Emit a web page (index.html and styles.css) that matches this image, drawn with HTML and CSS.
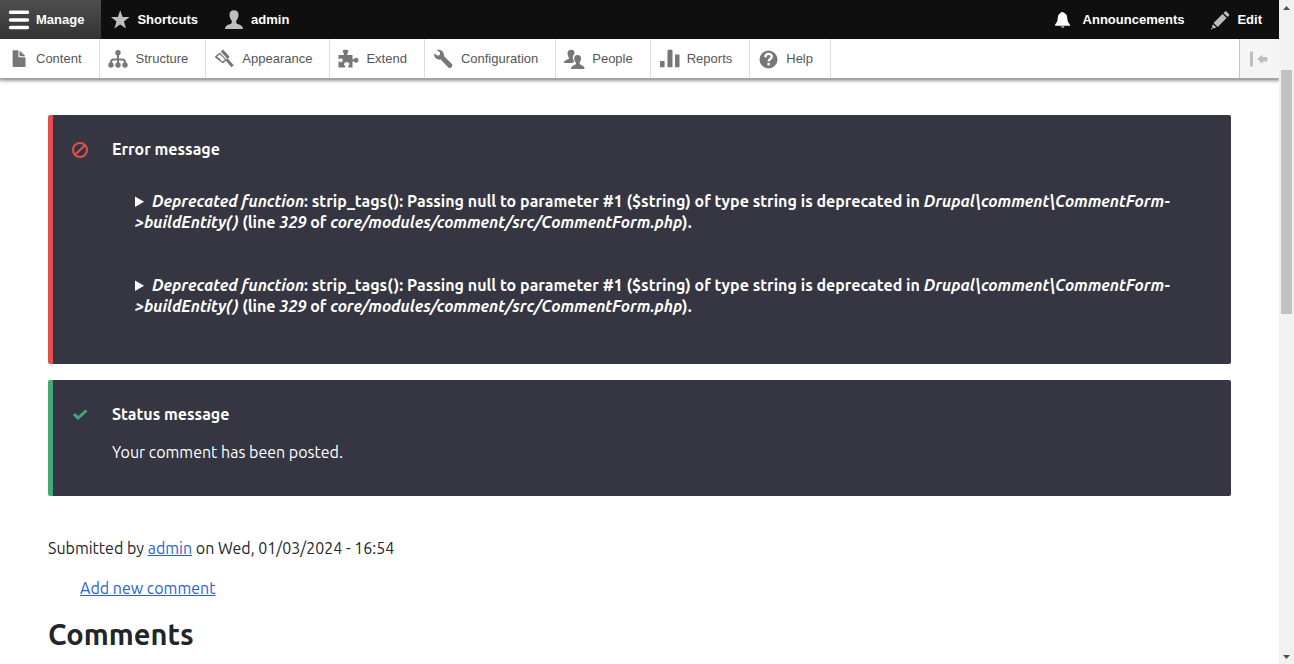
FILE: index.html
```html
<!DOCTYPE html>
<html lang="en">
<head>
    <meta charset="UTF-8">
    <title>Comments</title>
    <link rel="stylesheet" href="styles.css">
</head>
<body>
    <div class="page">
        <!-- Admin toolbar -->
        <header class="toolbar">
            <nav class="bar">
                <button class="tab active" type="button">
                    <svg class="icon" viewBox="0 0 20 20"><path d="M1.500 0.500h17a1.500 1.500 0 0 1 0 3.500h-17a1.500 1.500 0 0 1 0-3.500zM1.500 8.200h17a1.500 1.500 0 0 1 0 3.500h-17a1.500 1.500 0 0 1 0-3.500zM1.500 15.700h17a1.500 1.500 0 0 1 0 3.500h-17a1.500 1.500 0 0 1 0-3.500z" fill="#fff"/></svg>
                    Manage
                </button>
                <button class="tab" type="button">
                    <svg class="icon" viewBox="0 0 20 20"><path d="M10.200.2l2.400 6.800 7 .1-5.700 4.300 2.100 7.200-5.800-4.200-5.900 4.200 2.200-7.200L.9 7.100l7-.1z"/></svg>
                    Shortcuts
                </button>
                <button class="tab" type="button">
                    <svg class="icon" viewBox="0 0 20 20"><path d="M10 .3c2.900 0 4.700 1.700 4.500 4.900-.1 2.300-1 3.800-1.900 5.100-.6.900-.5 2.200-.1 2.900.7 1.100 6.500 1.300 6.500 5.800H1c0-4.500 5.800-4.700 6.500-5.800.4-.7.5-2-.1-2.900-.9-1.300-1.800-2.800-1.900-5.100C5.300 2 7.100.3 10 .3z"/></svg>
                    admin
                </button>
                <button class="tab push" type="button">
                    <svg class="icon" viewBox="0 0 20 20"><path d="M6.500 2.500c1-.4 1.500 0 1.900.5 2.100 1 2.700 2.900 2.900 5.200.2 3.100.8 4.300 2.600 6.200v1.300H-.9v-1.300c1.800-1.900 2.400-3.100 2.600-6.200.2-2.300.8-4.200 2.900-5.200.2-.9 1-1.200 1.900-.5zM4.600 16.600h3.800c-.2 1.600-3.500 1.600-3.800 0z" fill="#fff"/></svg>
                    Announcements
                </button>
                <button class="tab" type="button">
                    <svg class="icon" viewBox="0 0 20 20"><path d="M14.800 1.700c.6-.6 1.300-.5 1.800 0l2.300 2.300c.6.600.6 1.200 0 1.800l-1.300 1.300-4.100-4.100zM12.500 4l4.100 4.100-8.900 8.900-4.100-4.100zM3 14.200l3.300 3.300-2.800 1-1.600-1.600zM1.500 17.700l1.300 1.300-1.500.5c-.3 0-.4-.2-.3-.4z"/></svg>
                    Edit
                </button>
            </nav>
            <nav class="tray">
                <a href="#"><svg class="icon" viewBox="0 0 20 20"><path d="M5.200 1.300h4.600c.4 0 .6.300.6.600v5.600c0 .5.3.8.8.8h5.600c.4 0 .7.2.7.600v8.400c0 .4-.3.700-.7.700H5.200c-.4 0-.6-.3-.6-.7V1.900c0-.4.2-.6.600-.6zM11.500 2.100c0-.4.200-.4.500-.2l5 4.900c.3.300.2.500-.2.500h-4.600c-.4 0-.7-.2-.7-.6z"/></svg>Content</a>
                <a href="#"><svg class="icon" viewBox="0 0 20 20"><path d="M10 4v12M3 15.500v-2.300Q3 10.500 5.700 10.500h8.600q2.700 0 2.700 2.700v2.300" fill="none" stroke="#777" stroke-width="2"/><circle cx="10" cy="3.800" r="2.700"/><circle cx="3" cy="16" r="2.700"/><circle cx="10" cy="16" r="2.700"/><circle cx="17" cy="16" r="2.700"/></svg>Structure</a>
                <a href="#"><svg class="icon" viewBox="0 0 20 20"><path d="M9 .6l6.700 7.200-2.200 2.100L6.800 2.600zM6 3.400l6.700 7.300-3.200 3.200c-.5.400-1.100.4-1.600-.1L1.400 8.700c-.5-.5-.4-1.100 0-1.600zM5.800 5.200L3.200 7.700l1.600 1.500 1.300-.5-.2 1.600 2.500 2.300 2.600-2.200z" fill-rule="evenodd"/><path d="M12.500 10.300l6.100 6.900" fill="none" stroke="#777" stroke-width="3"/></svg>Appearance</a>
                <a href="#"><svg class="icon" viewBox="0 0 20 20"><path d="M.5 6h5.300V4c-1.500-.6-1.500-3 .4-3.300h2.600c2.100.3 2 2.700.5 3.300v2h5.200v4.200H16c.8-2.400 4.500-1.800 4.500 1.100s-3.700 3.300-4.500 1.100h-1.500v6.100h-4.200v-1.700c1.900-1 1.200-3.900-1.500-3.900s-3.500 2.900-1.700 3.900v1.700H.5v-6h1.200c.6 1.400 3 1.100 3-1.200S2.200 8.600 1.600 10H.5z"/></svg>Extend</a>
                <a href="#"><svg class="icon" viewBox="0 0 20 20"><path d="M1.200 4.600l3.500 2.200 2.300-1-.1-2.500L3.600 1.100C7.500-.2 11.300 2.500 11 6.900l7.900 8c1.600 1.700-1.400 5.500-3.600 3.600l-7.600-7.900C3.700 11.300.5 8.300 1.200 4.600z"/></svg>Configuration</a>
                <a href="#"><svg class="icon" viewBox="0 0 20 20"><path d="M7 .8c2.500-.1 3.800 1.500 3.400 4.200-1.600 1.200-2 3.400-1.100 5.800.3.800.8 1.300.9 2-.4.8-1.900.8-2.800 1.200H0c.1-3.500 4.400-3.200 4.900-4.500.3-.9-.8-2-1.100-3.300C3 3.200 4.300.9 7 .8z"/><path d="M13.500 6c2.800 0 3.900 2 3.500 4.500-.2 1.700-1.700 3-1.300 4.300.4 1.600 4.900 1.300 4.900 5.200H7c0-3.900 4.600-3.600 5-5.200.2-1.300-1.500-2.500-1.700-4.300C10 8 10.900 6 13.500 6z"/></svg>People</a>
                <a href="#"><svg class="icon" viewBox="0 0 20 20"><path d="M1.500 12h3.600c.3 0 .5.200.5.500v5.300c0 .3-.2.500-.5.500H1.500c-.3 0-.5-.2-.5-.5v-5.300c0-.3.200-.5.500-.5zM9 .8h4c.3 0 .5.200.5.500v16.500c0 .3-.2.500-.5.500H9c-.3 0-.5-.2-.5-.5V1.300c0-.3.200-.5.500-.5zM16.500 5.500h4v12.800h-4c-.3 0-.5-.2-.5-.5V6c0-.3.200-.5.500-.5z"/></svg>Reports</a>
                <a href="#"><svg class="icon" viewBox="0 0 20 20"><circle cx="10.500" cy="10.500" r="9"/><path d="M7.400 8.200c0-4.500 6.500-4.200 6.300-.5-.1 2.300-3.100 2.300-3.100 4.800" fill="none" stroke="#fff" stroke-width="2.400"/><path d="M9.400 14h2.500v2.400H9.400z" fill="#fff"/></svg>Help</a>
                <button class="orient" type="button" aria-label="Vertical orientation">
                    <svg class="icon" viewBox="0 0 20 20"><path d="M1 2.500h3v15H1zM8.300 10l5.200-4.500V8h4.900v4.500h-4.900V15z"/></svg>
                </button>
            </nav>
        </header>

        <main class="content">
            <!-- Messages -->
            <section class="message error">
                <svg class="mark" viewBox="0 0 16 16"><circle cx="8" cy="8" r="7"/><path d="M3.200 12.800l9.600-9.600"/></svg>
                <div class="body">
                    <h2>Error message</h2>
                    <div class="errors">
                        <details>
                            <summary><em>Deprecated function</em>: strip_tags(): Passing null to parameter #1 ($string) of type string is deprecated in <em>Drupal\comment\CommentForm-&gt;buildEntity()</em> (line <em>329</em> of <em>core/modules/comment/src/CommentForm.php</em>).</summary>
                        </details>
                        <details>
                            <summary><em>Deprecated function</em>: strip_tags(): Passing null to parameter #1 ($string) of type string is deprecated in <em>Drupal\comment\CommentForm-&gt;buildEntity()</em> (line <em>329</em> of <em>core/modules/comment/src/CommentForm.php</em>).</summary>
                        </details>
                    </div>
                </div>
            </section>
            <section class="message status">
                <svg class="mark" viewBox="0 0 16 16"><path d="M2 7l4 4 8.500-7.500"/></svg>
                <div class="body">
                    <h2>Status message</h2>
                    <p>Your comment has been posted.</p>
                </div>
            </section>

            <p class="submitted">Submitted by <a href="#">admin</a> on Wed, 01/03/2024 - 16:54</p>
            <ul class="links">
                <li><a href="#">Add new comment</a></li>
            </ul>
            <h2 class="title">Comments</h2>
        </main>
    </div>

    <!-- Scroll bar -->
    <div class="scroll">
        <svg viewBox="0 0 15 15"><path d="M4 10h7L7.500 6z"/></svg>
        <div class="track"><div class="thumb"></div></div>
        <svg viewBox="0 0 15 15"><path d="M4 6h7l-3.500 4z"/></svg>
    </div>
</body>
</html>
```
FILE: styles.css
```css
* { box-sizing: border-box; }
body { margin: 0; height: 100vh; overflow: hidden; display: grid; grid-template-columns: 1fr 15px; background: #fff; color: #222629; font: 16px/21px Ubuntu, Roboto, sans-serif; }
h2, p, ul { margin: 0; padding: 0; }
.page { min-width: 0; height: 100vh; overflow: hidden; }

/* toolbar */
.toolbar { font: 13px/15px "Liberation Sans", Arial, sans-serif; box-shadow: 0 0 4px 1px #0009; border-bottom: 1px solid #a6a6a6; }
.bar { display: flex; height: 39px; background: #0f0f0f; }
.tab { display: flex; align-items: center; gap: 7px; border: 0; padding: 0 17px 0 9px; background: none; color: #fff; font: inherit; font-weight: bold; cursor: pointer; }
.tab.active { background: linear-gradient(#4e4e4e, #333); }
.tab.push { margin-left: auto; }
.icon { width: 20px; height: 20px; flex: none; overflow: visible; fill: #bebebe; }
.tray { display: flex; height: 39px; background: #fff; }
.tray a { display: flex; align-items: center; gap: 8px; padding: 0 17px 0 8px; border-right: 1px solid #ddd; color: #565656; text-decoration: none; }
.tray a .icon { fill: #777; }
.orient { display: flex; align-items: center; width: 40px; margin-left: auto; padding: 0 9px; border: 0; border-left: 1px solid #c5c5c5; background: #f5f5f5; }

/* page content */
.content { padding: 36px 48px 0; }
.content a { color: #2b5fd9; }
.message { display: flex; align-items: flex-start; gap: 24px; margin-bottom: 16px; padding: 24px 40px 33px 19px; border-left: 5px solid; border-radius: 2px; background: #353641; }
.message.error { border-color: #e34f4f; }
.message.status { border-color: #42a877; }
.message h2, .message p, .message summary { color: #fff; }
.message h2 { font-size: 16px; line-height: 21px; }
.message p { margin-top: 17px; }
.body { flex: 1; }
.mark { width: 16px; height: 16px; margin-top: 3px; flex: none; fill: none; stroke-width: 2; }
.error .mark { stroke: #e34f4f; }
.status .mark { stroke: #42a877; stroke-width: 3; }
.errors { display: grid; gap: 42px; padding: 31px 0 14px 23px; }
summary { font-weight: bold; }
.submitted { margin-top: 42px; }
.links { margin-top: 19px; padding-left: 32px; list-style: none; }
.title { margin-top: 17px; font-size: 29px; line-height: 36px; }

/* scroll bar */
.scroll { display: flex; flex-direction: column; background: #f1f1f1; }
.scroll svg { width: 15px; height: 15px; fill: #505050; }
.track { flex: 1; padding: 55px 2px 0; }
.thumb { height: 244px; background: #c1c1c1; }
```
